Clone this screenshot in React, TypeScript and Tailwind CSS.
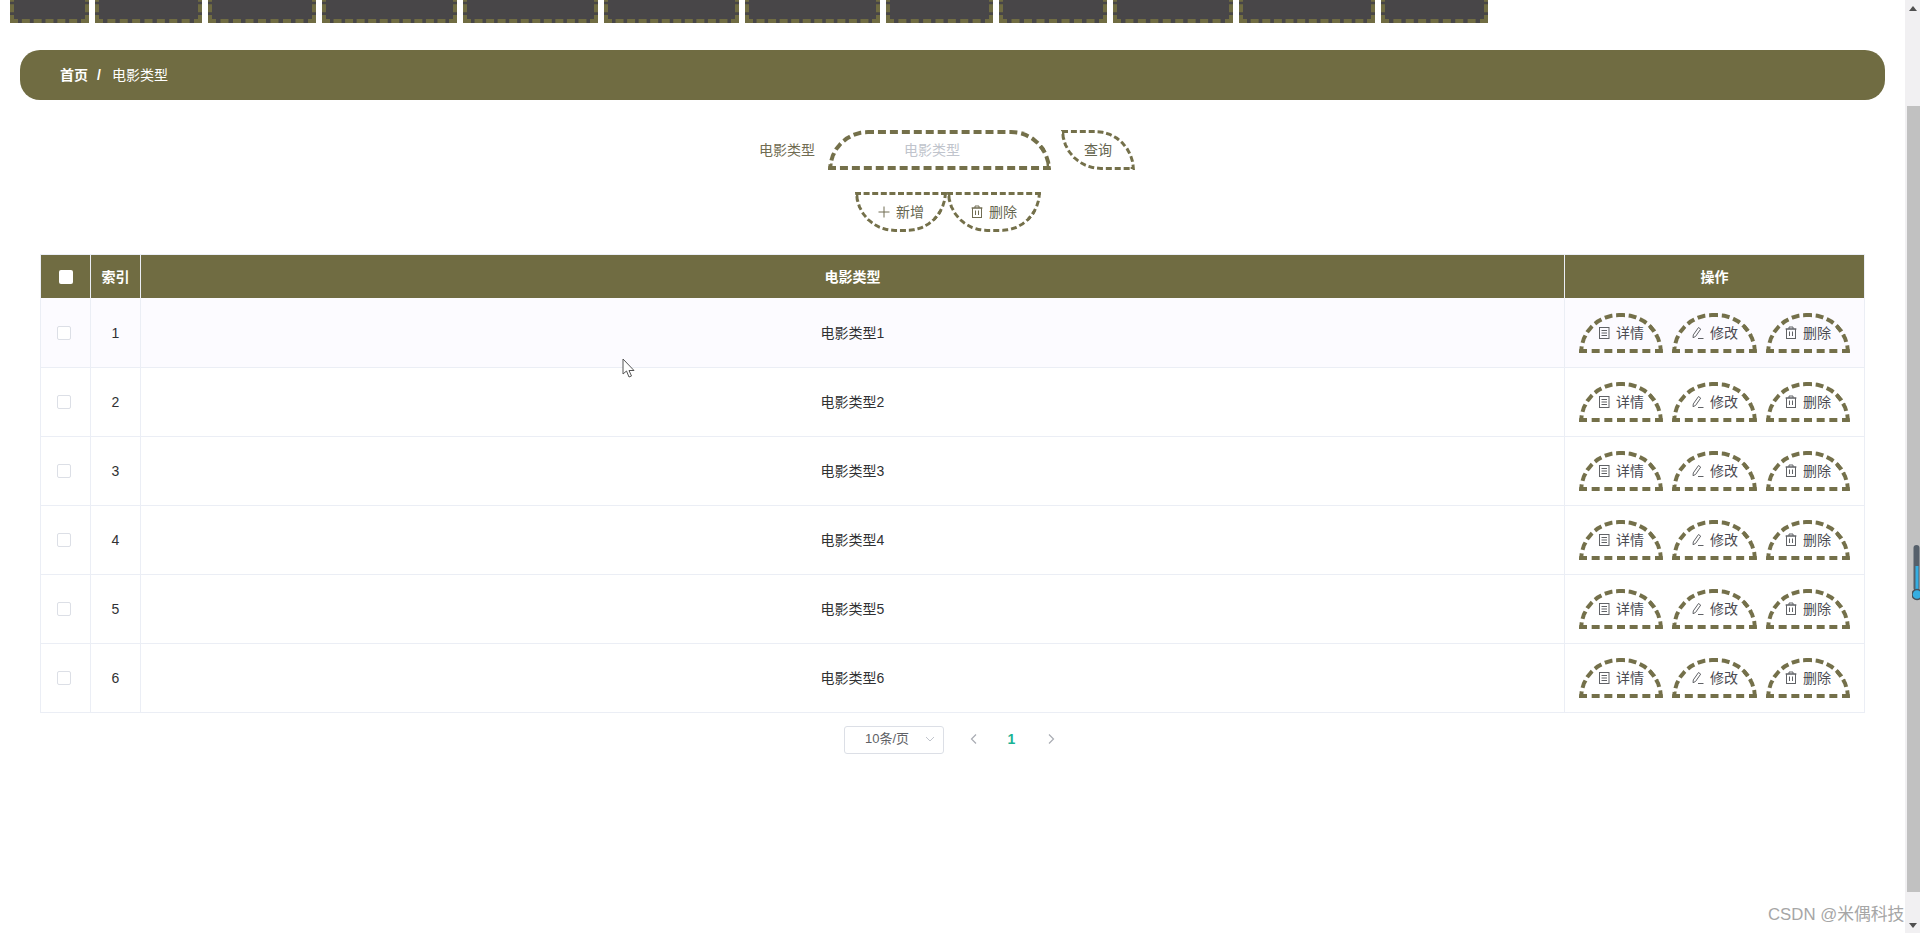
import React from 'react';

const tabWidths = [
  'w-[79px]', 'w-[107px]', 'w-[108px]', 'w-[135px]', 'w-[135px]', 'w-[135px]',
  'w-[135px]', 'w-[107px]', 'w-[108px]', 'w-[120px]', 'w-[136px]', 'w-[107px]',
];

const rows = ['1', '2', '3', '4', '5', '6'];

const TicketsIcon = () => (
  <svg width="12" height="14" viewBox="0 0 12 14" fill="none" stroke="#606266" strokeWidth="1">
    <rect x="1.5" y="1.5" width="9.5" height="11" />
    <path d="M3.5 4.5h5.5M3.5 7h5.5M3.5 9.5h5.5" />
  </svg>
);

const EditIcon = () => (
  <svg width="13" height="14" viewBox="0 0 13 14" fill="none" stroke="#606266" strokeWidth="1">
    <path d="M7.5 1.5l2.2 1.6-5.2 7.4-2.5 1.2.3-2.8z" />
    <path d="M7 12.5h5.5" />
  </svg>
);

const TrashIcon = ({ color = '#606266' }: { color?: string }) => (
  <svg width="12" height="14" viewBox="0 0 12 14" fill="none" stroke={color} strokeWidth="1">
    <path d="M0.5 3h11M4 3V1h4v2" />
    <rect x="1.5" y="3" width="9" height="9.5" />
    <path d="M4.5 5.5v4.5M7.5 5.5v4.5" />
  </svg>
);

const ActionButton = ({ icon, label, width }: { icon: React.ReactNode; label: string; width: string }) => (
  <button className={`${width} h-10 border-4 border-dashed border-[#74704a] rounded-t-[40px] flex items-center justify-center gap-[6px] text-sm text-[#4b4b52] bg-transparent`}>
    {icon}
    <span>{label}</span>
  </button>
);

export default function App() {
  return (
    <div className="relative flex h-[933px] w-[1920px] overflow-hidden bg-white font-['Liberation_Sans','Noto_Sans_CJK_SC',sans-serif] text-sm">
      <main className="w-[1905px] flex-none">
        {/* Top nav, scrolled off */}
        <div className="flex h-[23px] items-end gap-[6px] overflow-hidden pl-[10px]">
          {tabWidths.map((w, i) => (
            <div key={i} className={`${w} h-[40px] flex-none border-4 border-dashed border-[#706c42] bg-[#484648]`} />
          ))}
        </div>

        {/* Breadcrumb */}
        <div className="mx-5 mt-[27px] flex h-[50px] items-center rounded-[20px] bg-[#706c42] pl-10 text-white">
          <span className="font-bold">首页</span>
          <span className="ml-[9px] mr-[11px] font-bold">/</span>
          <span>电影类型</span>
        </div>

        {/* Search */}
        <div className="mt-[30px] flex justify-center pr-[11px]">
          <div className="flex h-10 items-center gap-3">
            <label className="mr-px w-14 text-[#706c52]">电影类型</label>
            <div className="flex h-10 w-[223px] items-center justify-center rounded-t-[40px] border-4 border-dashed border-[#74704a] pr-[15px] text-[#c0c4cc]">
              电影类型
            </div>
            <button className="-ml-[2px] h-10 w-[74px] rounded-tr-[40px] rounded-bl-[40px] border-[3px] border-dashed border-[#74704a] text-[#666650]">
              查询
            </button>
          </div>
        </div>

        <div className="mt-[22px] flex justify-center pr-[9px]">
          <button className="flex h-10 w-[92px] items-center justify-center gap-[6px] rounded-b-[40px] border-[3px] border-dashed border-[#74704a] text-[#666650]">
            <svg width="12" height="12" viewBox="0 0 12 12" stroke="#706c52" strokeWidth="1">
              <path d="M6 0.5v11M0.5 6h11" />
            </svg>
            <span>新增</span>
          </button>
          <button className="flex h-10 w-[94px] items-center justify-center gap-[6px] rounded-b-[40px] border-[3px] border-dashed border-[#74704a] text-[#666650]">
            <TrashIcon color="#706c52" />
            <span>删除</span>
          </button>
        </div>

        {/* Table */}
        <div className="ml-10 mt-[22px] w-[1825px] border border-[#ebeef5] border-b-0">
          <div className="grid h-[43px] grid-cols-[50px_50px_1fr_299px] bg-[#706c42] font-bold text-white">
            <div className="flex items-center justify-center border-r border-[#ebeef5]">
              <span className="h-[14px] w-[14px] rounded-[2px] bg-white" />
            </div>
            <div className="flex items-center justify-center border-r border-[#ebeef5]">索引</div>
            <div className="flex items-center justify-center border-r border-[#ebeef5]">电影类型</div>
            <div className="flex items-center justify-center">操作</div>
          </div>
          {rows.map((n, i) => (
            <div
              key={n}
              className={`grid grid-cols-[50px_50px_1fr_299px] border-b border-[#ebeef5] text-[#303133] ${i === 0 ? 'h-[70px] bg-[#fcfbff]' : 'h-[69px] bg-white'}`}
            >
              <div className="flex items-center justify-center border-r border-[#ebeef5]">
                <span className="mr-[3px] h-[14px] w-[14px] rounded-[2px] border border-[#dcdfe6] bg-white" />
              </div>
              <div className="flex items-center justify-center border-r border-[#ebeef5]">{n}</div>
              <div className="flex items-center justify-center border-r border-[#ebeef5]">电影类型{n}</div>
              <div className="flex items-center justify-center gap-[9px]">
                <ActionButton icon={<TicketsIcon />} label="详情" width="w-[84px]" />
                <ActionButton icon={<EditIcon />} label="修改" width="w-[85px]" />
                <ActionButton icon={<TrashIcon />} label="删除" width="w-[84px]" />
              </div>
            </div>
          ))}
        </div>

        {/* Pagination */}
        <div className="ml-[844px] mt-[13px] flex h-7 items-center text-[13px] text-[#606266]">
          <div className="flex h-7 w-[100px] items-center rounded-[3px] border border-[#dcdfe6] pb-[2px] pl-5 pr-[7px]">
            <span className="flex-1">10条/页</span>
            <svg width="12" height="12" viewBox="0 0 12 12" fill="none" stroke="#c0c4cc" strokeWidth="1">
              <path d="M2 4l4 4 4-4" />
            </svg>
          </div>
          <svg className="mb-[2px] ml-[25px]" width="10" height="12" viewBox="0 0 10 12" fill="none" stroke="#a9acb3" strokeWidth="1.2">
            <path d="M7 1.5L2.5 6 7 10.5" />
          </svg>
          <span className="mb-[2px] ml-[28px] w-[9px] text-center text-sm font-bold text-[#1ab394]">1</span>
          <svg className="mb-[2px] ml-[30px]" width="10" height="12" viewBox="0 0 10 12" fill="none" stroke="#a9acb3" strokeWidth="1.2">
            <path d="M3 1.5L7.5 6 3 10.5" />
          </svg>
        </div>
      </main>

      {/* Scrollbar */}
      <div className="flex h-[933px] w-[15px] flex-none flex-col bg-[#f1f0f2]">
        <div className="flex h-[106px] justify-center pt-[6px]">
          <span className="h-0 w-0 border-x-[4px] border-b-[5px] border-x-transparent border-b-[#505050]" />
        </div>
        <div className="ml-[2px] h-[786px] bg-[#c1c1c1]" />
        <div className="flex flex-1 items-end justify-center pb-[5px]">
          <span className="h-0 w-0 border-x-[4px] border-t-[5px] border-x-transparent border-t-[#505050]" />
        </div>
      </div>

      {/* Thermometer overlay on scrollbar */}
      <svg className="absolute left-[1912px] top-[544px]" width="8" height="58" viewBox="0 0 8 58">
        <rect x="1.5" y="1" width="6" height="46" rx="3" fill="#56606b" />
        <rect x="3.5" y="22" width="3" height="28" fill="#35aee2" />
        <circle cx="5" cy="50.5" r="5" fill="#35aee2" stroke="#47525c" strokeWidth="1.5" />
      </svg>

      {/* Mouse cursor */}
      <svg className="absolute left-[622px] top-[358px]" width="14" height="20" viewBox="0 0 14 20" fill="white" stroke="#555" strokeWidth="1">
        <path d="M1 1v15l3.5-3 2.5 6 2.5-1-2.5-5.5H12z" />
      </svg>

      {/* Watermark */}
      <span className="absolute left-[1768px] top-[904px] text-[16.8px] leading-[22px] text-[#a6a6a6]">CSDN @米偶科技</span>
    </div>
  );
}
